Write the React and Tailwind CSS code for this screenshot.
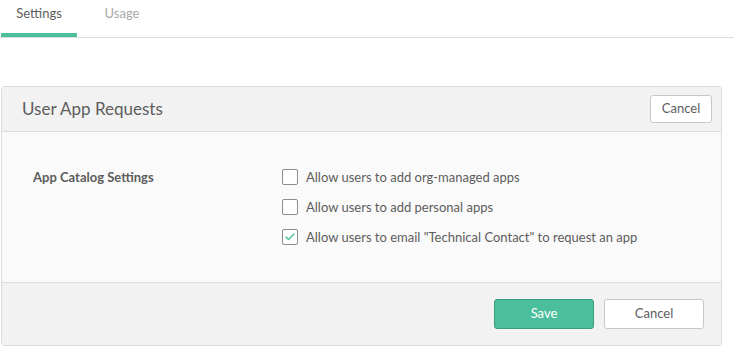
import { Check } from "lucide-react";

const options = [
  { label: "Allow users to add org-managed apps", checked: false },
  { label: "Allow users to add personal apps", checked: false },
  { label: 'Allow users to email "Technical Contact" to request an app', checked: true },
];

function Checkbox({ checked }) {
  return (
    <span className="grid size-4 shrink-0 place-items-center rounded-[2px] border border-[#8c8c8c] bg-white">
      {checked && <Check className="size-3 text-[#4bbf9b]" strokeWidth={3} />}
    </span>
  );
}

export default function App() {
  return (
    <div className="h-[352px] w-[734px] bg-white font-['Lato',sans-serif] text-[#5d5d5d]">
      <div className="flex h-[38px] border-b border-[#dcdcdc] pl-[1px]">
        <div className="flex w-[76px] items-start justify-center border-b-4 border-[#4bbf9b] pt-[4px] text-[13px] text-[#5d5d5d]">Settings</div>
        <div className="flex w-[90px] items-start justify-center pt-[4px] text-[13px] text-[#aaaaaa]">Usage</div>
      </div>

      <section className="mx-[1px] mt-[48px] w-[721px] overflow-hidden rounded-[3px] border border-[#dddddd]">
        <header className="flex h-[45px] items-center justify-between border-b border-[#dddddd] bg-[#f2f2f2] pl-[20px] pr-[9px]">
          <h2 className="text-[17px] text-[#5d5d5d]">User App Requests</h2>
          <button className="h-[28px] w-[62px] rounded-[3px] border border-[#c8c8c8] bg-white text-[13px] text-[#5d5d5d]">Cancel</button>
        </header>

        <div className="flex h-[150px] bg-[#fafafa] pt-[37px]">
          <div className="w-[280px] pl-[31px] text-[13px] leading-[16px] font-bold text-[#5d5d5d]">App Catalog Settings</div>
          <div className="flex flex-col gap-[14px]">
            {options.map((o) => (
              <label key={o.label} className="flex items-center gap-[8px] text-[13px] leading-[16px] text-[#5d5d5d]">
                <Checkbox checked={o.checked} />
                {o.label}
              </label>
            ))}
          </div>
        </div>

        <footer className="flex h-[63px] items-start justify-end gap-[10px] border-t border-[#dddddd] bg-[#f2f2f2] pr-[17px] pt-[16px]">
          <button className="h-[30px] w-[100px] rounded-[3px] border border-[#3a9d7e] bg-[#4bbf9b] text-[13px] text-white">Save</button>
          <button className="h-[30px] w-[100px] rounded-[3px] border border-[#c8c8c8] bg-white text-[13px] text-[#5d5d5d]">Cancel</button>
        </footer>
      </section>
    </div>
  );
}
